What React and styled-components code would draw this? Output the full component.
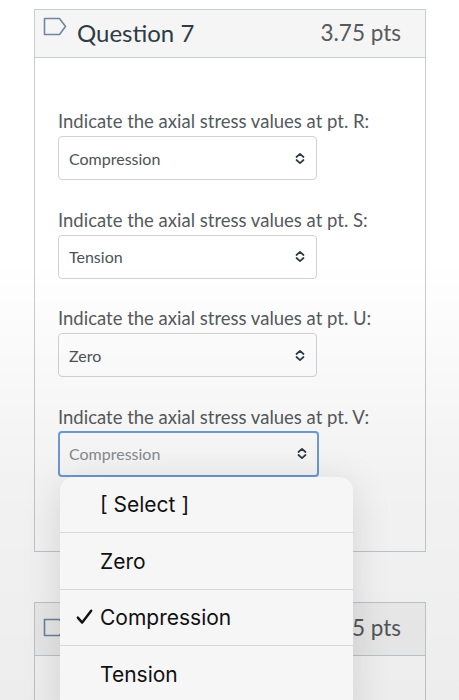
import React from "react";
import styled, { createGlobalStyle } from "styled-components";

const GlobalStyle = createGlobalStyle`
  html, body {
    margin: 0;
    padding: 0;
    background: #ffffff;
  }
  body {
    font-family: Lato, "Liberation Sans", sans-serif;
    overflow: hidden;
  }
`;

const Page = styled.div`
  position: relative;
  width: 459px;
  height: 700px;
  overflow: hidden;
  padding-top: 9px;
  box-sizing: border-box;
`;

const Card = styled.div`
  margin-left: 34px;
  width: 392px;
  border: 1px solid #c7cdd1;
  box-sizing: border-box;
  margin-bottom: 50px;
`;

const Header = styled.div`
  display: flex;
  align-items: center;
  height: ${(p) => p.height || 47}px;
  padding: 0 24px 0 8px;
  background: #f5f5f5;
  border-bottom: 1px solid #c7cdd1;
`;

const FlagWrap = styled.span`
  display: flex;
  margin-bottom: ${(p) => p.lift || 15}px;
`;

const Title = styled.div`
  flex: 1;
  margin-left: 9px;
  margin-bottom: 2px;
  font-size: 24px;
  color: #2d3b45;
`;

const Points = styled.div`
  margin-bottom: 2px;
  font-size: 22.5px;
  color: #555a5e;
`;

const Body = styled.div`
  padding: 52px 0 74px 23px;
  background: #ffffff;
`;

const Field = styled.div`
  display: flex;
  flex-direction: column;
  gap: 4px;
  margin-bottom: 28.5px;
  &:last-child {
    margin-bottom: 0;
  }
`;

const Label = styled.div`
  font-size: 18.5px;
  line-height: 22px;
  white-space: nowrap;
  color: #555a5e;
`;

const SelectBox = styled.div`
  display: flex;
  align-items: center;
  justify-content: space-between;
  box-sizing: border-box;
  width: ${(p) => (p.focused ? "261px" : "259px")};
  height: ${(p) => (p.focused ? "46px" : "44px")};
  margin-top: ${(p) => (p.focused ? "-1px" : "0")};
  padding: 0 ${(p) => (p.focused ? "10px" : "11px")} 0 ${(p) => (p.focused ? "9px" : "10px")};
  border: ${(p) => (p.focused ? "2px solid #6f9fd8" : "1px solid #cfd3d6")};
  border-radius: 4px;
  background: #ffffff;
  font-size: 16px;
  color: ${(p) => (p.focused ? "#8a8f93" : "#4d5256")};
`;

const Flag = () => (
  <svg width="25" height="19" viewBox="0 0 25 19">
    <path
      d="M1.5 1.5 H16.5 L22.5 9.5 L16.5 17.5 H1.5 Z"
      fill="none"
      stroke="#7186a3"
      strokeWidth="1.6"
      strokeLinejoin="round"
    />
  </svg>
);

const Chevron = () => (
  <svg width="10" height="13" viewBox="0 0 10 13">
    <path
      d="M1.5 5 L5 1.8 L8.5 5 M1.5 8 L5 11.2 L8.5 8"
      fill="none"
      stroke="#2d3b45"
      strokeWidth="1.7"
      strokeLinecap="round"
      strokeLinejoin="round"
    />
  </svg>
);

const Shade = styled.div`
  position: absolute;
  inset: 0;
  pointer-events: none;
  background: linear-gradient(
    to bottom,
    rgba(0, 0, 0, 0) 0px,
    rgba(0, 0, 0, 0) 260px,
    rgba(0, 0, 0, 0.05) 480px,
    rgba(0, 0, 0, 0.07) 700px
  );
`;

const Menu = styled.div`
  position: absolute;
  left: 60px;
  top: 477px;
  width: 293px;
  height: 250px;
  border-radius: 14px;
  background: #f6f6f6;
  box-shadow: 0 6px 40px rgba(0, 0, 0, 0.12);
  overflow: hidden;
  font-family: Inter, "Liberation Sans", sans-serif;
`;

const Option = styled.div`
  position: relative;
  display: flex;
  align-items: center;
  box-sizing: border-box;
  height: 56.4px;
  padding-left: 40px;
  font-size: 21px;
  color: #111111;
  border-bottom: 1px solid #d9d9d9;
  &:last-child {
    border-bottom: none;
  }
`;

const Check = styled.span`
  position: absolute;
  left: 16px;
  top: 50%;
  transform: translateY(-50%);
  display: flex;
`;

const CheckMark = () => (
  <svg width="17" height="16" viewBox="0 0 17 16">
    <path
      d="M1.8 8.6 L6.2 13.6 L15.2 1.8"
      fill="none"
      stroke="#111111"
      strokeWidth="2.4"
      strokeLinecap="round"
      strokeLinejoin="round"
    />
  </svg>
);

const fields = [
  { point: "R", value: "Compression" },
  { point: "S", value: "Tension" },
  { point: "U", value: "Zero" },
  { point: "V", value: "Compression", focused: true },
];

const options = ["[ Select ]", "Zero", "Compression", "Tension"];

export default function App() {
  return (
    <Page>
      <GlobalStyle />
      <Card>
        <Header>
          <FlagWrap>
            <Flag />
          </FlagWrap>
          <Title>Question 7</Title>
          <Points>3.75 pts</Points>
        </Header>
        <Body>
          {fields.map((f) => (
            <Field key={f.point}>
              <Label>Indicate the axial stress values at pt. {f.point}:</Label>
              <SelectBox focused={f.focused}>
                <span>{f.value}</span>
                <Chevron />
              </SelectBox>
            </Field>
          ))}
        </Body>
      </Card>
      <Card>
        <Header height={52}>
          <FlagWrap lift={2}>
            <Flag />
          </FlagWrap>
          <Title />
          <Points>3.75 pts</Points>
        </Header>
        <Body />
      </Card>
      <Shade />
      <Menu>
        {options.map((o) => (
          <Option key={o}>
            {o === "Compression" && (
              <Check>
                <CheckMark />
              </Check>
            )}
            {o}
          </Option>
        ))}
      </Menu>
    </Page>
  );
}
